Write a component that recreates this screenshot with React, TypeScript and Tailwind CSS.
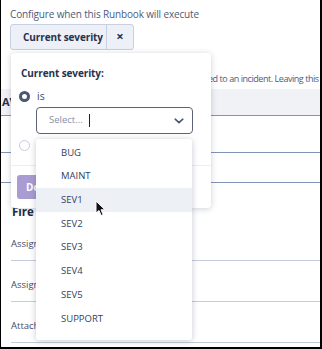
import React from "react";

const items = ["BUG", "MAINT", "SEV1", "SEV2", "SEV3", "SEV4", "SEV5", "SUPPORT"];

export default function App() {
  return (
    <div
      className="relative w-[322px] h-[349px] overflow-hidden bg-white border-l border-r-2 border-b-2 border-black"
      style={{ fontFamily: '"Open Sans", sans-serif' }}
    >
      {/* background page */}
      <div className="flex flex-col">
        <div className="pl-[9px] pt-[6px] text-[10px] leading-[16px] tracking-[-0.15px] text-[#4d5b7c]">
          Configure when this Runbook will execute
        </div>
        <div className="ml-[9px] mt-[2px] flex h-[26px] w-[124px] items-center rounded-[3px] border border-[#c8d0e1] bg-[#edf0f6] text-[#26324d]">
          <div className="flex h-full w-[95px] items-center pl-[12px] text-[10px] font-bold tracking-[-0.1px]">Current severity</div>
          <div className="flex h-full flex-1 items-center justify-center border-l border-[#c8d0e1] pb-[1px] text-[13px] font-bold">×</div>
        </div>
        <div className="mt-[21px] h-[16px] whitespace-nowrap pl-[207px] text-[9px] leading-[16px] tracking-[-0.45px] text-[#4d5b7c]">
          ed to an incident. Leaving this
        </div>
        <div className="mt-[2px] flex h-[27px] items-center border-b border-[#8393b2] bg-[#f0f2f6] pl-[1px] text-[11px] font-bold text-[#26324d]">
          AVAILABILITY
        </div>
        <div className="h-[37px] border-b border-[#8393b2]" />
        <div className="h-[30px] border-b border-[#8393b2]" />
        <div className="mt-[20px] h-[18px] pl-[11px] text-[11.5px] font-bold leading-[18px] text-[#1e2a44]">Fire</div>
        <div className="ml-[10px] flex h-[40px] items-end border-b border-[#c5ccdc] pb-[9px] text-[9.5px] leading-[14px] text-[#3f4b68]">Assign</div>
        <div className="ml-[10px] flex h-[41px] items-end border-b border-[#c5ccdc] pb-[9px] text-[9.5px] leading-[14px] text-[#3f4b68]">Assign</div>
        <div className="ml-[10px] flex h-[41px] items-end border-b border-[#c5ccdc] pb-[9px] text-[9.5px] leading-[14px] text-[#3f4b68]">Attach</div>
      </div>

      {/* popover */}
      <div className="absolute left-[10px] top-[53px] flex h-[155px] w-[200px] flex-col rounded-[4px] bg-white shadow-[0_1px_6px_rgba(30,40,70,0.22)]">
        <div className="pl-[10px] pt-[12px] text-[10px] font-bold leading-[16px] tracking-[-0.1px] text-[#26324d]">Current severity:</div>
        <div className="mt-[8px] flex h-[14px] items-center pl-[8px]">
          <span className="h-[11px] w-[11px] rounded-full border-[3.5px] border-[#4b5674] bg-white" />
          <span className="ml-[7px] text-[10.5px] leading-[14px] text-[#3f4b68]">is</span>
        </div>
        <div className="ml-[25px] mt-[4px] flex h-[27px] w-[157px] items-center rounded-[4px] border border-[#5a6378] pl-[12px] pr-[8px]">
          <span className="text-[9.5px] text-[#8690a8]">Select...</span>
          <span className="ml-[6px] h-[13px] w-px bg-[#222]" />
          <svg className="ml-auto" width="10" height="6" viewBox="0 0 10 6">
            <path d="M1.2 1.2 L5 4.6 L8.8 1.2" fill="none" stroke="#4b5674" strokeWidth="1.6" strokeLinecap="round" />
          </svg>
        </div>
        <div className="ml-[8px] mt-[6px]">
          <span className="block h-[11px] w-[11px] rounded-full border border-[#c7cde0] bg-white" />
        </div>
        <div className="mt-[14px] border-t border-[#eceef3]" />
        <div className="ml-[6px] mt-[9px] flex h-[24px] w-[50px] items-center rounded-[3px] bg-[#a99cd2] pl-[9px] text-[10px] font-bold text-white">Done</div>
      </div>

      {/* dropdown menu */}
      <div className="absolute left-[35px] top-[139px] h-[201px] w-[156px] rounded-[3px] bg-white pt-[2px] shadow-[0_1px_6px_rgba(30,40,70,0.25)]">
        {items.map((it) => (
          <div
            key={it}
            className={
              "flex h-[23.7px] items-center pl-[25px] text-[9.5px] text-[#34405d] " +
              (it === "SEV1" ? "bg-[#edf0f5]" : "")
            }
          >
            {it}
          </div>
        ))}
      </div>

      {/* cursor */}
      <svg className="absolute left-[94px] top-[200px]" width="12" height="17" viewBox="0 0 12 17">
        <path d="M1 1 L1 13 L4 10.5 L6.2 15.5 L8.2 14.6 L6 9.8 L10 9.8 Z" fill="#111" stroke="#fff" strokeWidth="1" strokeLinejoin="round" />
      </svg>
    </div>
  );
}
